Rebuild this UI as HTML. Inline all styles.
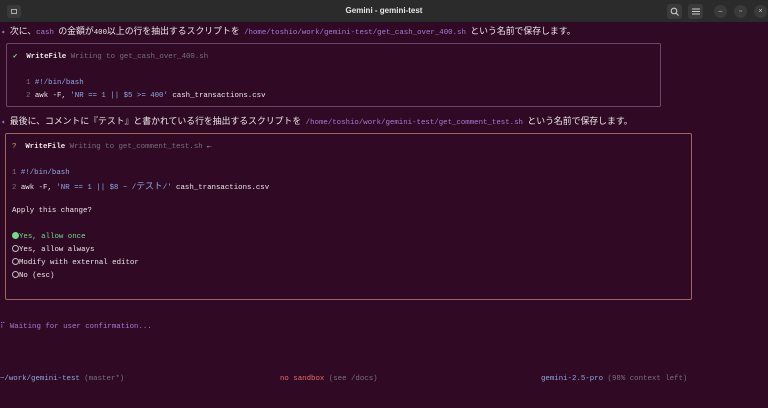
<!DOCTYPE html>
<html><head><meta charset="utf-8"><style>
*{margin:0;padding:0;box-sizing:border-box}
body{width:768px;height:408px;overflow:hidden;background:#300a24;font-family:"Liberation Mono","Noto Sans CJK JP",monospace;font-size:7.4px;color:#ece8ea;position:relative}
.t{position:absolute;white-space:pre;line-height:10px}
.j{font-family:"Noto Sans CJK JP",sans-serif;font-size:8.85px}
.bar{position:absolute;left:0;top:0;width:768px;height:22px;background:#2b2b2b}
.btn{position:absolute;top:4px;width:15px;height:15px;background:#3a3a3a;border-radius:3px}
.c{position:absolute;top:5px;width:13px;height:13px;border-radius:50%;background:#3a3a3a;color:#ccc;font-size:7px;text-align:center;line-height:13px;font-family:"Liberation Sans",sans-serif}
.p{color:#a57bd6}.g{color:#77707a}.b{color:#8fa8e6}.gr{color:#73d98a}.r{color:#e86a6a}.o{color:#e0a060}
.box{position:absolute;border:1px solid #6a4a66;border-radius:2px}
.rad{display:inline-block;width:7px;height:7px;border:1px solid #bbb;border-radius:50%;vertical-align:-1px}
</style></head><body>
<div class="bar"></div>
<div style="position:absolute;left:7px;top:5px;width:14px;height:13px;background:#3a3a3a;border-radius:3px"></div>
<div style="position:absolute;left:11px;top:9px;width:6px;height:5px;border:1px solid #aaa"></div>
<div class="t" style="left:0;width:768px;text-align:center;top:6px;font-family:'Liberation Sans',sans-serif;font-weight:bold;font-size:8px;color:#e6e6e6">Gemini - gemini-test</div>
<div class="btn" style="left:667px"></div>
<svg style="position:absolute;left:670px;top:7px" width="9" height="9"><circle cx="4" cy="4" r="2.8" fill="none" stroke="#ccc" stroke-width="1.1"/><line x1="6" y1="6" x2="8.5" y2="8.5" stroke="#ccc" stroke-width="1.1"/></svg>
<div class="btn" style="left:688px"></div>
<svg style="position:absolute;left:692px;top:8px" width="8" height="7"><path d="M0 1H8M0 3.5H8M0 6H8" stroke="#ccc"/></svg>
<div class="c" style="left:714px">–</div>
<div class="c" style="left:734px">▫</div>
<div class="c" style="left:754px">×</div>

<div class="t" style="left:1px;top:26px"><span class="p">✦</span> <span class="j">次に、</span><span class="p">cash</span> <span class="j">の金額が</span>400<span class="j">以上の行を抽出するスクリプトを</span> <span class="p">/home/toshio/work/gemini-test/get_cash_over_400.sh</span> <span class="j">という名前で保存します。</span></div>
<div class="box" style="left:6px;top:43px;width:655px;height:64px"></div>
<div class="t" style="left:13px;top:52px"><span class="gr">✔</span>  <b>WriteFile</b> <span class="g">Writing to get_cash_over_400.sh</span></div>
<div class="t" style="left:26px;top:78px"><span class="g">1</span> <span class="b">#!/bin/bash</span></div>
<div class="t" style="left:26px;top:91px"><span class="g">2</span> awk -F, <span class="b">'NR == 1 || $5 &gt;= 400'</span> cash_transactions.csv</div>

<div class="t" style="left:1px;top:116px"><span class="p">✦</span> <span class="j">最後に、コメントに『テスト』と書かれている行を抽出するスクリプトを</span> <span class="p">/home/toshio/work/gemini-test/get_comment_test.sh</span> <span class="j">という名前で保存します。</span></div>
<div class="box" style="left:5px;top:133px;width:687px;height:167px;border-color:#a0645a"></div>
<div class="t" style="left:12px;top:142px"><span class="o">?</span>  <b>WriteFile</b> <span class="g">Writing to get_comment_test.sh</span> ←</div>
<div class="t" style="left:12px;top:168px"><span class="g">1</span> <span class="b">#!/bin/bash</span></div>
<div class="t" style="left:12px;top:181px"><span class="g">2</span> awk -F, <span class="b">'NR == 1 || $8 ~ /<span class="j">テスト</span>/'</span> cash_transactions.csv</div>
<div class="t" style="left:12px;top:206px">Apply this change?</div>
<div class="t gr" style="left:12px;top:232px"><span class="rad" style="background:#73d98a;border-color:#73d98a"></span>Yes, allow once</div>
<div class="t" style="left:12px;top:245px"><span class="rad"></span>Yes, allow always</div>
<div class="t" style="left:12px;top:258px"><span class="rad"></span>Modify with external editor</div>
<div class="t" style="left:12px;top:271px"><span class="rad"></span>No (esc)</div>

<div class="t p" style="left:0;top:322px">⠏ Waiting for user confirmation...</div>
<div class="t" style="left:0;top:374px"><span class="b">~/work/gemini-test</span> <span class="g">(master*)</span></div>
<div class="t" style="left:280px;top:374px"><span class="r">no sandbox</span> <span class="g">(see /docs)</span></div>
<div class="t" style="left:541px;top:374px"><span class="b">gemini-2.5-pro</span> <span class="g">(98% context left)</span></div>
</body></html>
